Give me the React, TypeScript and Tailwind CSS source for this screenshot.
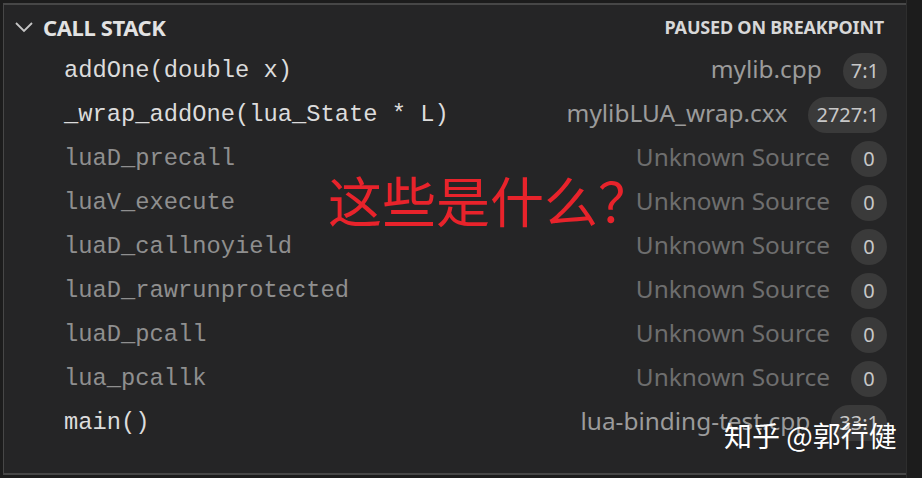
import React from "react";

type Frame = {
  name: string;
  bright: boolean;
  source: string;
  sourceDim: boolean;
  badge: string;
};

const frames: Frame[] = [
  { name: "addOne(double x)", bright: true, source: "mylib.cpp", sourceDim: false, badge: "7:1" },
  { name: "_wrap_addOne(lua_State * L)", bright: true, source: "mylibLUA_wrap.cxx", sourceDim: false, badge: "2727:1" },
  { name: "luaD_precall", bright: false, source: "Unknown Source", sourceDim: true, badge: "0" },
  { name: "luaV_execute", bright: false, source: "Unknown Source", sourceDim: true, badge: "0" },
  { name: "luaD_callnoyield", bright: false, source: "Unknown Source", sourceDim: true, badge: "0" },
  { name: "luaD_rawrunprotected", bright: false, source: "Unknown Source", sourceDim: true, badge: "0" },
  { name: "luaD_pcall", bright: false, source: "Unknown Source", sourceDim: true, badge: "0" },
  { name: "lua_pcallk", bright: false, source: "Unknown Source", sourceDim: true, badge: "0" },
  { name: "main()", bright: true, source: "lua-binding-test.cpp", sourceDim: false, badge: "33:1" },
];

const sans = { fontFamily: '"Noto Sans", "Open Sans", sans-serif' };

export default function App() {
  return (
    <div className="relative w-[922px] h-[478px] bg-[#1c1c1c] overflow-hidden">
      <div className="flex h-full">
        <div className="mt-[3px] ml-[3px] w-[903px] h-[472px] bg-[#252526] border-t-2 border-l border-b-2 border-[#474747] flex flex-col">
          <div className="h-[44px] flex items-center pl-[10px] pr-[22px]">
            <svg width="20" height="14" viewBox="0 0 20 14" className="mr-[9px]">
              <path d="M2 3 L10 11 L18 3" fill="none" stroke="#c5c5c5" strokeWidth="1.8" />
            </svg>
            <span className="text-[22px] font-bold text-[#e2e2e2] tracking-[-0.4px]" style={sans}>CALL STACK</span>
            <span className="ml-auto text-[18px] font-bold text-[#d8d8d8] tracking-[-0.2px]" style={sans}>PAUSED ON BREAKPOINT</span>
          </div>
          {frames.map((f) => (
            <div key={f.name} className="h-[44px] flex items-center pl-[60px] pr-[19px]">
              <span
                className={"text-[23.75px] " + (f.bright ? "text-[#dcdcdc]" : "text-[#8f8f8f]")}
                style={{ fontFamily: '"Liberation Mono", "DejaVu Sans Mono", monospace' }}
              >
                {f.name}
              </span>
              <span
                className={"ml-auto text-[24.4px] leading-none -mt-[3px] " + (f.sourceDim ? "text-[#6e6e6e]" : "text-[#9b9b9b]")}
                style={sans}
              >
                {f.source}
              </span>
              <span
                className="ml-[21px] h-[36px] min-w-[36px] px-[8px] rounded-full bg-[#3a3a3a] flex items-center justify-center text-[20px] text-[#c8c8c8]"
                style={sans}
              >
                {f.badge}
              </span>
            </div>
          ))}
        </div>
        <div className="w-[1px] h-full bg-[#2e2e2e]" />
      </div>
      <div
        className="absolute left-[328px] top-[173px] text-[54px] text-[#e8232b] leading-none"
        style={{ fontFamily: '"Noto Sans CJK SC", sans-serif' }}
      >
        这些是什么？
      </div>
      <div
        className="absolute left-[724px] top-[421px] text-[28px] text-white leading-none"
        style={{ fontFamily: '"Noto Sans CJK SC", sans-serif' }}
      >
        知乎 @郭行健
      </div>
    </div>
  );
}
